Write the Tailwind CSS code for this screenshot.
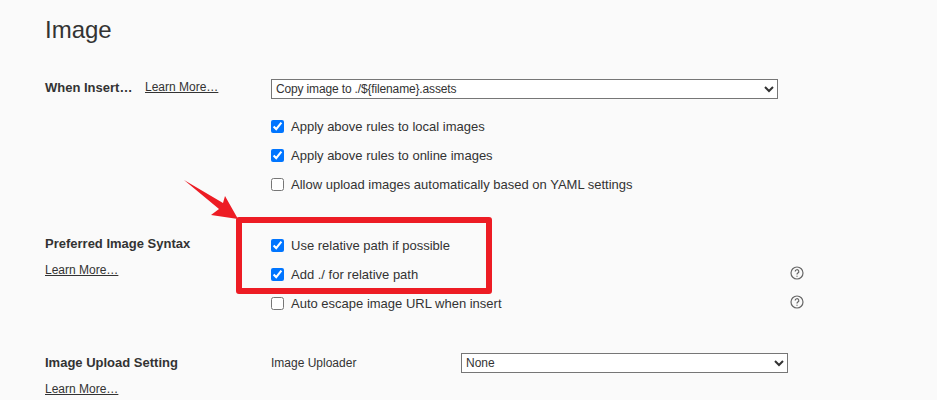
<!DOCTYPE html>
<html lang="en">
<head>
    <meta charset="UTF-8">
    <title>Image</title>
    <script src="https://cdn.jsdelivr.net/npm/@tailwindcss/browser@4"></script>
</head>
<body class="relative h-[400px] overflow-hidden bg-[#fafafa] font-['Liberation_Sans',Arial,sans-serif] text-[#333]">
    <div class="pl-[45px] pr-[133px]">
        <h1 class="pt-[15px] h-[64px] text-[24px] leading-[30px] font-normal">Image</h1>

        <!-- When Insert -->
        <div class="flex h-[155px]">
            <div class="w-[226px] shrink-0 flex items-start h-[20px] mt-[15px] text-[13px]">
                <span class="font-bold w-[100px] leading-[17px]">When Insert…</span>
                <a href="#" class="underline leading-[17px] text-[12px]">Learn More…</a>
            </div>
            <div class="grow">
                <select class="block mt-[15px] w-[507px] h-[20px] bg-white border border-[#767676] text-[12px] leading-[18px] tracking-[-0.15px]">
                    <option>Copy image to ./${filename}.assets</option>
                </select>
                <div class="mt-[19px] flex flex-col gap-[13px] text-[13px]">
                    <label class="flex items-center gap-[7px] h-[16px]"><input type="checkbox" checked class="w-[13px] h-[13px]"><span class="pt-[2px]">Apply above rules to local images</span></label>
                    <label class="flex items-center gap-[7px] h-[16px]"><input type="checkbox" checked class="w-[13px] h-[13px]"><span class="pt-[2px]">Apply above rules to online images</span></label>
                    <label class="flex items-center gap-[7px] h-[16px]"><input type="checkbox" class="w-[13px] h-[13px]"><span class="pt-[2px]">Allow upload images automatically based on YAML settings</span></label>
                </div>
            </div>
        </div>

        <!-- Preferred Image Syntax -->
        <div class="flex h-[118px] pt-[18px]">
            <div class="w-[226px] shrink-0 text-[13px]">
                <div class="font-bold leading-[17px] -mt-[2px]">Preferred Image Syntax</div>
                <a href="#" class="block w-fit underline text-[12px] leading-[17px] mt-[10px]">Learn More…</a>
            </div>
            <div class="grow flex flex-col gap-[13px] text-[13px]">
                <label class="flex items-center gap-[7px] h-[16px]"><input type="checkbox" checked class="w-[13px] h-[13px]"><span class="pt-[1px]">Use relative path if possible</span></label>
                <div class="flex items-center justify-between h-[16px]">
                    <label class="flex items-center gap-[7px]"><input type="checkbox" checked class="w-[13px] h-[13px]"><span class="pt-[1px]">Add ./ for relative path</span></label>
                    <svg class="w-[14px] h-[14px] -mt-[2px] text-[#666]" viewBox="0 0 14 14" fill="none" stroke="currentColor" stroke-width="1.2"><circle cx="7" cy="7" r="6"/><path d="M5.2 5.6a1.8 1.8 0 1 1 2.7 1.5c-.6.4-.9.7-.9 1.4"/><path d="M7 9.8v1"/></svg>
                </div>
                <div class="flex items-center justify-between h-[16px]">
                    <label class="flex items-center gap-[7px]"><input type="checkbox" class="w-[13px] h-[13px]"><span class="pt-[1px]">Auto escape image URL when insert</span></label>
                    <svg class="w-[14px] h-[14px] -mt-[2px] text-[#666]" viewBox="0 0 14 14" fill="none" stroke="currentColor" stroke-width="1.2"><circle cx="7" cy="7" r="6"/><path d="M5.2 5.6a1.8 1.8 0 1 1 2.7 1.5c-.6.4-.9.7-.9 1.4"/><path d="M7 9.8v1"/></svg>
                </div>
            </div>
        </div>

        <!-- Image Upload Setting -->
        <div class="flex pt-[16px]">
            <div class="w-[226px] shrink-0 text-[13px]">
                <div class="font-bold leading-[17px] mt-[1px]">Image Upload Setting</div>
                <a href="#" class="block w-fit underline text-[12px] leading-[17px] mt-[10px]">Learn More…</a>
            </div>
            <div class="w-[190px] shrink-0 text-[12px] leading-[17px] pt-[2px]">Image Uploader</div>
            <select class="block w-[327px] h-[20px] bg-white border border-[#767676] text-[12px] leading-[18px]">
                <option>None</option>
            </select>
        </div>
    </div>

    <!-- annotation over the page -->
    <div class="absolute left-[236px] top-[217px] w-[256px] h-[77px] border-[6px] border-[#ed1c24] rounded-[3px]"></div>
    <svg class="absolute left-0 top-0 w-[937px] h-[400px] pointer-events-none" viewBox="0 0 937 400"><polygon points="184,180 223,203 225,196 238,219 211,215 219,209" fill="#ed1c24"/></svg>
</body>
</html>
